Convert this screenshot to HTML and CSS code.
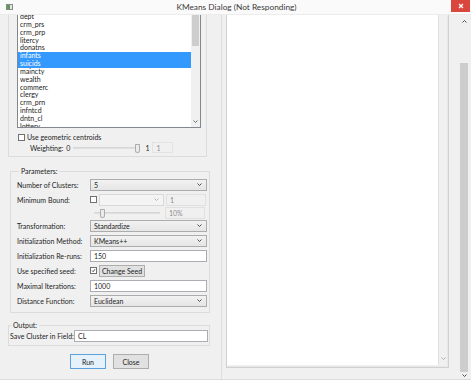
FILE: index.html
```html
<!DOCTYPE html>
<html lang="en">
<head>
  <meta charset="UTF-8" />
  <title>KMeans Dialog</title>
  <link rel="stylesheet" href="styles.css">
</head>
<body>
  <div class="window">
    <div class="titlebar">
      <span class="app-icon"></span>
      <span class="title">KMeans Dialog (Not Responding)</span>
      <span class="close">
        <svg width="6" height="6" viewBox="0 0 6 6"><path d="M1 1L5 5M5 1L1 5" stroke="#fff" stroke-width="1.2"/></svg>
      </span>
    </div>

    <div class="content">
      <div class="left">
        <div class="vars">
          <div class="listbox">
            <ul class="items">
              <li>dept</li>
              <li>crm_prs</li>
              <li>crm_prp</li>
              <li>litercy</li>
              <li>donatns</li>
              <li class="sel">infants</li>
              <li class="sel">suicids</li>
              <li>maincty</li>
              <li>wealth</li>
              <li>commerc</li>
              <li>clergy</li>
              <li>crm_prn</li>
              <li>infntcd</li>
              <li>dntn_cl</li>
              <li>lottery</li>
            </ul>
            <div class="list-scroll">
              <div class="list-thumb"></div>
              <svg class="arrow-down" width="5" height="3" viewBox="0 0 5 3"><path d="M0.5 0.5L2.5 2.5L4.5 0.5" stroke="#606060" fill="none" stroke-width="0.9"/></svg>
            </div>
          </div>

          <div class="check-row">
            <span class="checkbox"></span>
            <span>Use geometric centroids</span>
          </div>
          <div class="weight-row">
            <span class="w-label">Weighting:</span>
            <span class="w-min">0</span>
            <span class="slider"><span class="thumb thumb-end"></span></span>
            <span class="w-max">1</span>
            <span class="field w-field">1</span>
          </div>
        </div>

        <fieldset class="group params">
          <legend>Parameters:</legend>
          <div class="row">
            <span class="lbl">Number of Clusters:</span>
            <span class="combo">5<svg width="5" height="3" viewBox="0 0 5 3"><path d="M0.5 0.5L2.5 2.5L4.5 0.5" stroke="#404040" fill="none" stroke-width="0.9"/></svg></span>
          </div>
          <div class="row">
            <span class="lbl">Minimum Bound:</span>
            <span class="ctrl">
              <span class="checkbox"></span>
              <span class="combo disabled"><svg width="5" height="3" viewBox="0 0 5 3"><path d="M0.5 0.5L2.5 2.5L4.5 0.5" stroke="#b0b0b0" fill="none" stroke-width="0.9"/></svg></span>
              <span class="field small disabled">1</span>
            </span>
          </div>
          <div class="row row-slider">
            <span class="lbl"></span>
            <span class="ctrl">
              <span class="slider bound-slider"><span class="thumb thumb-start"></span></span>
              <span class="field small disabled">10%</span>
            </span>
          </div>
          <div class="row">
            <span class="lbl">Transformation:</span>
            <span class="combo">Standardize<svg width="5" height="3" viewBox="0 0 5 3"><path d="M0.5 0.5L2.5 2.5L4.5 0.5" stroke="#404040" fill="none" stroke-width="0.9"/></svg></span>
          </div>
          <div class="row">
            <span class="lbl">Initialization Method:</span>
            <span class="combo">KMeans++<svg width="5" height="3" viewBox="0 0 5 3"><path d="M0.5 0.5L2.5 2.5L4.5 0.5" stroke="#404040" fill="none" stroke-width="0.9"/></svg></span>
          </div>
          <div class="row">
            <span class="lbl">Initialization Re-runs:</span>
            <span class="field">150</span>
          </div>
          <div class="row">
            <span class="lbl">Use specified seed:</span>
            <span class="ctrl">
              <span class="checkbox checked">
                <svg width="7" height="7" viewBox="0 0 7 7"><path d="M1.5 3.6L3 5.2L5.6 1.6" stroke="#202020" fill="none" stroke-width="1.1"/></svg>
              </span>
              <span class="btn seed-btn">Change Seed</span>
            </span>
          </div>
          <div class="row">
            <span class="lbl">Maximal Iterations:</span>
            <span class="field">1000</span>
          </div>
          <div class="row">
            <span class="lbl">Distance Function:</span>
            <span class="combo">Euclidean<svg width="5" height="3" viewBox="0 0 5 3"><path d="M0.5 0.5L2.5 2.5L4.5 0.5" stroke="#404040" fill="none" stroke-width="0.9"/></svg></span>
          </div>
        </fieldset>

        <fieldset class="group output">
          <legend>Output:</legend>
          <div class="out-row">
            <span class="out-lbl">Save Cluster in Field:</span>
            <span class="field out-field">CL</span>
          </div>
        </fieldset>

        <div class="buttons">
          <span class="btn default">Run</span>
          <span class="btn">Close</span>
        </div>
      </div>

      <div class="right">
        <div class="report"></div>
        <div class="report-scroll">
          <svg width="5" height="3" viewBox="0 0 5 3"><path d="M0.5 0.5L2.5 2.5L4.5 0.5" stroke="#a8a8a8" fill="none" stroke-width="0.9"/></svg>
        </div>
      </div>

      <div class="outer-scroll">
        <svg class="up" width="5" height="3" viewBox="0 0 5 3"><path d="M0.5 2.5L2.5 0.5L4.5 2.5" stroke="#404040" fill="none" stroke-width="0.9"/></svg>
        <div class="outer-thumb"></div>
        <svg class="down" width="5" height="3" viewBox="0 0 5 3"><path d="M0.5 0.5L2.5 2.5L4.5 0.5" stroke="#404040" fill="none" stroke-width="0.9"/></svg>
      </div>
    </div>
  </div>
</body>
</html>
```

FILE: styles.css
```css
* {
  margin: 0;
  padding: 0;
  box-sizing: border-box;
}

body {
  background-color: #ffffff;
  font-family: Lato, 'Noto Sans', sans-serif;
  font-size: 7px;
  color: #1e1e1e;
  white-space: nowrap;
}

.window {
  width: 471px;
  height: 380px;
  background-color: #f0f0f0;
  border-bottom: 1px solid #dcdcdc;
  overflow: hidden;
}

/* title bar */
.titlebar {
  position: relative;
  height: 15px;
  background-color: #fafafa;
  border-bottom: 1px solid #ececec;
  display: flex;
  align-items: center;
  justify-content: center;
}

.app-icon {
  position: absolute;
  left: 6px;
  top: 4px;
  width: 7px;
  height: 6px;
  border: 1px solid #8a8a8a;
  background: linear-gradient(90deg, #5a9a5a 0 3px, #e6e6e6 3px);
}

.title {
  font-size: 8.3px;
  color: #3a3a3a;
  margin-left: 2px;
}

.close {
  position: absolute;
  right: 1px;
  top: 0;
  width: 19px;
  height: 12px;
  background-color: #d9463e;
  display: flex;
  align-items: center;
  justify-content: center;
}

.content {
  display: flex;
  height: 364px;
}

/* left column */
.left {
  width: 222px;
  border-right: 1px solid #dedede;
  flex-shrink: 0;
}

.vars {
  margin-left: 8px;
  width: 199px;
  height: 142px;
  border: 1px solid #dcdcdc;
  border-top: none;
  padding-left: 8px;
}

.listbox {
  width: 184px;
  height: 113px;
  background-color: #ffffff;
  border: 1px solid #828790;
  border-top: none;
  display: flex;
  overflow: hidden;
}

.items {
  list-style: none;
  flex: 1;
  margin-top: -2px;
}

.items li {
  height: 7.85px;
  line-height: 7.85px;
  padding-left: 2px;
  color: #222;
}

.items li.sel {
  background-color: #3399ff;
  color: #ffffff;
}

.list-scroll {
  width: 9px;
  position: relative;
  background-color: #f0f0f0;
}

.list-thumb {
  margin: 0 1px;
  height: 31px;
  background-color: #cdcdcd;
}

.list-scroll .arrow-down {
  position: absolute;
  left: 2px;
  bottom: 4px;
}

.check-row {
  display: flex;
  align-items: center;
  gap: 2px;
  margin-top: 5px;
  margin-left: 1px;
  height: 8px;
}

.checkbox {
  width: 7px;
  height: 7px;
  border: 1px solid #707070;
  background-color: #ffffff;
  display: inline-flex;
  align-items: center;
  justify-content: center;
  flex-shrink: 0;
}

.weight-row {
  display: flex;
  align-items: center;
  height: 11px;
  margin-top: 1px;
  padding-left: 13px;
}

.w-min {
  margin-left: 3px;
}

.slider {
  position: relative;
  height: 2px;
  background-color: #e0e0e0;
  border-top: 1px solid #d6d6d6;
}

.weight-row .slider {
  width: 67px;
  margin-left: 3px;
}

.thumb {
  position: absolute;
  top: -4px;
  width: 5px;
  height: 9px;
  background-color: #ececec;
  border: 1px solid #acacac;
  border-radius: 1px 1px 3px 3px;
}

.thumb-end {
  right: 0;
}

.thumb-start {
  left: 6px;
}

.w-max {
  margin-left: 5px;
}

.field {
  height: 12px;
  background-color: #ffffff;
  border: 1px solid #abadb3;
  padding-left: 3px;
  display: flex;
  align-items: center;
  width: 117px;
}

.w-field {
  width: 21px;
  height: 11px;
  margin-left: 3px;
  background-color: #f0f0f0;
  border-color: #e3e3e3;
  color: #8d8d8d;
}

/* parameter groups */
.group {
  border: 1px solid #dcdcdc;
  margin-left: 10px;
  width: 200px;
}

.group legend {
  padding: 0 2px;
  margin-left: 2px;
  line-height: 8px;
}

.params {
  margin-top: 10px;
  padding: 2px 0 4px 6px;
}

.row {
  display: flex;
  align-items: center;
  height: 15px;
}

.row-slider {
  height: 11px;
}

.lbl {
  width: 73px;
  flex-shrink: 0;
}

.ctrl {
  display: flex;
  align-items: center;
  gap: 2px;
}

.combo {
  width: 117px;
  height: 12px;
  border: 1px solid #acacac;
  background: linear-gradient(#f2f2f2, #e5e5e5);
  padding: 0 4px 0 3px;
  display: flex;
  align-items: center;
  justify-content: space-between;
}

.combo.disabled {
  width: 65px;
  background: #f4f4f4;
  border-color: #d9d9d9;
  justify-content: flex-end;
}

.field.small {
  width: 40px;
}

.field.disabled {
  background-color: #f0f0f0;
  border-color: #e0e0e0;
  color: #8d8d8d;
}

.bound-slider {
  width: 66px;
  margin: 0 3px 0 4px;
}

.btn {
  height: 15px;
  border: 1px solid #adadad;
  background-color: #e1e1e1;
  display: inline-flex;
  align-items: center;
  justify-content: center;
  width: 36px;
}

.seed-btn {
  width: 46px;
  height: 12px;
}

.output {
  margin-top: 8px;
  margin-left: 8px;
  width: 202px;
  height: 25px;
  padding: 1px 0 0 0;
}

.out-row {
  display: flex;
  align-items: center;
  gap: 2px;
}

.out-lbl {
  width: 62px;
  margin-left: 1px;
}

.out-field {
  width: 134px;
}

.buttons {
  display: flex;
  gap: 7px;
  margin-top: 8px;
  padding-left: 70px;
}

.btn.default {
  background-color: #e5f1fb;
  border-color: #5ea0d8;
}

/* right column */
.right {
  width: 223px;
  height: 353px;
  margin-left: 4px;
  border: 1px solid #d0d0d0;
  border-top: none;
  box-shadow: inset -1px -1px 0 #e8e8e8;
  display: flex;
  flex-shrink: 0;
}

.report {
  flex: 1;
  background-color: #ffffff;
  border-right: 1px solid #e2e2e2;
  margin-bottom: 2px;
}

.report-scroll {
  width: 9px;
  position: relative;
}

.report-scroll svg {
  position: absolute;
  left: 2px;
  bottom: 7px;
}

.outer-scroll {
  position: relative;
  width: 12px;
  margin-left: 9px;
  height: 364px;
  background-color: #f0f0f0;
  flex-shrink: 0;
}

.outer-scroll .up {
  position: absolute;
  left: 4px;
  top: 5px;
}

.outer-thumb {
  position: absolute;
  top: 48px;
  left: 2px;
  width: 8px;
  height: 309px;
  background-color: #cdcdcd;
}

.outer-scroll .down {
  position: absolute;
  left: 4px;
  bottom: 2px;
}
```
